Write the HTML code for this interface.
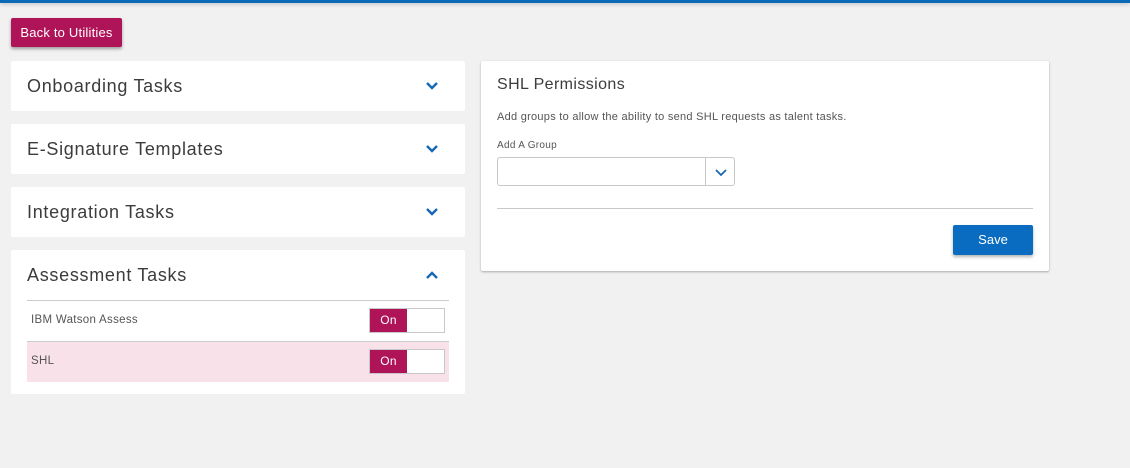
<!DOCTYPE html>
<html><head><style>
*{box-sizing:border-box;margin:0;padding:0}
body{width:1130px;height:468px;background:#f1f1f1;font-family:"Liberation Sans",sans-serif;color:#444;position:relative;overflow:hidden}
.top{position:absolute;left:0;top:0;width:1130px;height:3px;background:#0a6ab8;box-shadow:0 1px 4px rgba(0,0,0,.25)}
.back{position:absolute;left:11px;top:18px;width:111px;height:29px;background:#ae1457;color:#fff;font-size:13px;line-height:29px;text-align:center;border-radius:2px;box-shadow:0 2px 3px rgba(0,0,0,.35);letter-spacing:.2px}
.card{position:absolute;left:11px;width:454px;background:#fff;border-radius:2px}
.card h3{position:absolute;left:16px;font-weight:normal;font-size:18px;color:#3c3c3c;letter-spacing:.7px}
.chev{position:absolute;left:414px}
.row{position:absolute;left:16px;width:422px;height:41px;font-size:11.5px;color:#555;border-top:1px solid #ccc;letter-spacing:.3px}
.row span{position:absolute;left:4px;top:13px}
.tog{position:absolute;left:342px;top:7px;width:76px;height:25px;border:1px solid #c8c8c8;background:#fff}
.tog b{position:absolute;left:0;top:0;width:37px;height:23px;background:#ae1457;color:#fff;font-weight:normal;font-size:12px;line-height:23px;text-align:center}
.panel{position:absolute;left:481px;top:61px;width:568px;height:210px;background:#fff;border-radius:2px;box-shadow:0 1px 2px rgba(0,0,0,.3)}
</style></head><body>
<div class="top"></div>
<div class="back">Back to Utilities</div>

<div class="card" style="top:61px;height:50px"><h3 style="top:15px">Onboarding Tasks</h3>
<svg class="chev" style="top:20px" width="14" height="10"><path d="M2 2l5 5 5-5" stroke="#1768b5" stroke-width="2.4" fill="none"/></svg></div>
<div class="card" style="top:124px;height:50px"><h3 style="top:15px">E-Signature Templates</h3>
<svg class="chev" style="top:20px" width="14" height="10"><path d="M2 2l5 5 5-5" stroke="#1768b5" stroke-width="2.4" fill="none"/></svg></div>
<div class="card" style="top:187px;height:50px"><h3 style="top:15px">Integration Tasks</h3>
<svg class="chev" style="top:20px" width="14" height="10"><path d="M2 2l5 5 5-5" stroke="#1768b5" stroke-width="2.4" fill="none"/></svg></div>
<div class="card" style="top:250px;height:144px"><h3 style="top:15px">Assessment Tasks</h3>
<svg class="chev" style="top:20px" width="14" height="10"><path d="M2 8l5-5 5 5" stroke="#1768b5" stroke-width="2.4" fill="none"/></svg>
<div class="row" style="top:50px"><span>IBM Watson Assess</span><div class="tog"><b>On</b></div></div>
<div class="row" style="top:91px;background:#f9e1e9"><span>SHL</span><div class="tog"><b>On</b></div></div>
</div>

<div class="panel">
<div style="position:absolute;left:16px;top:15px;font-size:16px;color:#3c3c3c;letter-spacing:.4px">SHL Permissions</div>
<div style="position:absolute;left:16px;top:50px;font-size:11px;color:#555;letter-spacing:.27px">Add groups to allow the ability to send SHL requests as talent tasks.</div>
<div style="position:absolute;left:16px;top:79px;font-size:10px;color:#555;letter-spacing:.3px">Add A Group</div>
<div style="position:absolute;left:16px;top:96px;width:238px;height:29px;border:1px solid #c8c8c8;border-radius:3px">
<div style="position:absolute;left:207px;top:0;width:1px;height:27px;background:#c8c8c8"></div>
<svg style="position:absolute;left:216px;top:10px" width="14" height="9"><path d="M2 2l5 5 5-5" stroke="#1768b5" stroke-width="1.8" fill="none"/></svg></div>
<div style="position:absolute;left:16px;top:147px;width:536px;height:1px;background:#c8c8c8"></div>
<div style="position:absolute;left:472px;top:164px;width:80px;height:30px;background:#0a6cc0;color:#fff;font-size:13px;line-height:30px;text-align:center;border-radius:2px;box-shadow:0 2px 3px rgba(0,0,0,.3)">Save</div>
</div>
</body></html>
